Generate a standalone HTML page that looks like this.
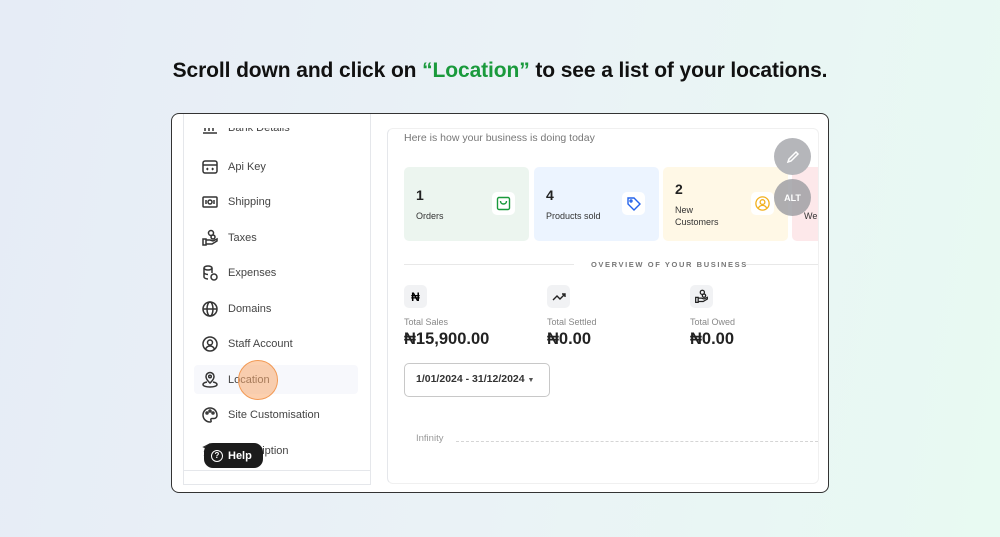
<!DOCTYPE html>
<html><head><meta charset="utf-8"><style>
*{margin:0;padding:0;box-sizing:border-box}
body{width:1000px;height:537px;overflow:hidden;font-family:"Liberation Sans",sans-serif;background:linear-gradient(100deg,#e6ecf6 0%,#eaf2f6 50%,#e8faf2 100%);position:relative}
.title{position:absolute;top:59px;left:0;width:1000px;text-align:center;font-size:21px;font-weight:bold;color:#111;letter-spacing:-0.1px}
.title span{color:#1a9a3c}
.frame{position:absolute;left:171px;top:113px;width:658px;height:380px;border:1.5px solid #333;border-radius:8px;background:#fff;overflow:hidden}
.side{position:absolute;left:11px;top:-5px;width:188px;height:376px;border:1px solid #e5e7eb;border-top:none}
.clip{position:absolute;left:0;top:19px;width:186px;height:340px;overflow:hidden}
.side .bot{position:absolute;left:0;right:0;top:361px;border-top:1px solid #e5e7eb}
.it{position:absolute;left:17px;height:28px;display:flex;align-items:center;font-size:11px;color:#444}
.it svg{width:18px;height:18px;margin-right:9px;stroke:#333;fill:none;stroke-width:1.5}
.hl{position:absolute;left:10px;top:237px;width:164px;height:29px;background:#f7f8fc;border-radius:4px}
.main{position:absolute;left:215px;top:14px;width:432px;height:356px;border-left:1px solid #e5e7eb;border-top:1px solid #f0f0f0;border-right:1px solid #f0f0f0;border-bottom:1px solid #f0f0f0;border-radius:6px;overflow:hidden}
.card{position:absolute;top:38px;width:125px;height:74px;border-radius:5px}
.card .n{position:absolute;left:12px;top:20px;font-size:14px;font-weight:bold;color:#222}
.card .l{position:absolute;left:12px;top:43px;font-size:9px;color:#333;line-height:12px}
.card .ic{position:absolute;left:88px;top:25px;width:23px;height:23px;background:#fff;border-radius:5px;display:flex;align-items:center;justify-content:center}
.sm{position:absolute;font-size:9px;color:#888}
.big{position:absolute;font-size:16.5px;font-weight:bold;color:#222}
.sq{position:absolute;width:23px;height:23px;background:#f1f2f4;border-radius:5px;display:flex;align-items:center;justify-content:center;font-weight:bold;font-size:12px}
</style></head><body>
<div class="title">Scroll down and click on <span>“Location”</span> to see a list of your locations.</div>
<div class="frame">
 <div class="side">
  <div class="clip">
  <div class="hl"></div>
  <div class="it" style="top:-14px"><svg viewBox="0 0 18 18"><path d="M2 14h14M4 12V6M8 12V6M12 12V6M3 5l6-3 6 3"/></svg>Bank Details</div>
  <div class="it" style="top:25px"><svg viewBox="0 0 18 18"><rect x="2" y="3" width="14" height="12" rx="2"/><path d="M2 7h14M7 10l-1 1 1 1M11 10l1 1-1 1"/></svg>Api Key</div>
  <div class="it" style="top:60px"><svg viewBox="0 0 18 18"><rect x="2" y="4" width="14" height="10" rx="1"/><circle cx="9" cy="9" r="2"/><path d="M5 7v4M13 7v4"/></svg>Shipping</div>
  <div class="it" style="top:96px"><svg viewBox="0 0 18 18"><circle cx="10" cy="4" r="2.5"/><circle cx="12" cy="8" r="2"/><path d="M2 10h3v6H2zM5 11h4l3 1 4-2v2l-5 3H5"/></svg>Taxes</div>
  <div class="it" style="top:131px"><svg viewBox="0 0 18 18"><ellipse cx="7" cy="4" rx="4" ry="2"/><path d="M3 4v9c0 1 2 2 4 2M11 4v5M3 8.5c0 1 2 2 4 2"/><circle cx="13" cy="13" r="3"/></svg>Expenses</div>
  <div class="it" style="top:167px"><svg viewBox="0 0 18 18"><circle cx="9" cy="9" r="7"/><ellipse cx="9" cy="9" rx="3" ry="7"/><path d="M2 9h14"/></svg>Domains</div>
  <div class="it" style="top:202px"><svg viewBox="0 0 18 18"><circle cx="9" cy="9" r="7"/><circle cx="9" cy="7.5" r="2.5"/><path d="M4.5 14c1-2 2.5-3 4.5-3s3.5 1 4.5 3"/></svg>Staff Account</div>
  <div class="it" style="top:238px"><svg viewBox="0 0 18 18"><path d="M9 12s4-3.5 4-6.5a4 4 0 00-8 0C5 8.5 9 12 9 12z"/><circle cx="9" cy="5.5" r="1.3"/><path d="M6 11c-3 .5-4 1.5-4 2.5 0 1.5 3 2.5 7 2.5s7-1 7-2.5c0-1-1-2-4-2.5"/></svg>Location</div>
  <div class="it" style="top:273px"><svg viewBox="0 0 18 18"><path d="M9 2a7 7 0 000 14c1 0 1.5-.7 1-1.5-.6-1 0-2 1-2h2a3 3 0 003-3C16 5 13 2 9 2z"/><circle cx="6" cy="7" r="1"/><circle cx="9" cy="5" r="1"/><circle cx="12" cy="7" r="1"/></svg>Site Customisation</div>
  <div class="it" style="top:309px"><svg viewBox="0 0 18 18"><path d="M3 5l6-3 6 3-6 3zM3 9l6 3 6-3M3 13l6 3 6-3"/></svg>Subscription</div>
  </div>
  <div class="bot"></div>
 </div>
 <div style="position:absolute;left:66px;top:246px;width:40px;height:40px;border-radius:50%;background:rgba(250,170,110,.55);border:1.5px solid #f29a55"></div>
 <div style="position:absolute;left:32px;top:329px;width:59px;height:25px;border-radius:9px;background:#1c1c1c;color:#fff;font-size:11px;font-weight:bold;display:flex;align-items:center;padding-left:7px"><span style="display:inline-block;width:12px;height:12px;border:1.2px solid #fff;border-radius:50%;font-size:8px;text-align:center;line-height:10px;margin-right:5px">?</span>Help</div>
 <div class="main">
  <div style="position:absolute;left:16px;top:3px;font-size:10.5px;color:#777">Here is how your business is doing today</div>
  <div class="card" style="left:16px;background:#ecf5ef"><div class="n">1</div><div class="l">Orders</div><div class="ic"><svg width="15" height="15" viewBox="0 0 15 15" fill="none" stroke="#1a9a3c" stroke-width="1.4"><rect x="1.5" y="1.5" width="12" height="12" rx="1.5"/><path d="M4.5 5c0 2 1.3 3 3 3s3-1 3-3"/></svg></div></div>
  <div class="card" style="left:146px;background:#ecf4ff"><div class="n">4</div><div class="l">Products sold</div><div class="ic"><svg width="16" height="16" viewBox="0 0 16 16" fill="none" stroke="#2563eb" stroke-width="1.4"><path d="M2 2h6l6 6-6 6-6-6z"/><circle cx="5" cy="5" r="1"/></svg></div></div>
  <div class="card" style="left:275px;background:#fff8e6"><div class="n" style="top:14px">2</div><div class="l" style="top:37px">New<br>Customers</div><div class="ic"><svg width="17" height="17" viewBox="0 0 18 18" fill="none" stroke="#f2b01e" stroke-width="1.4"><circle cx="9" cy="9" r="7"/><circle cx="9" cy="7.5" r="2.5"/><path d="M4.5 14c1-2 2.5-3 4.5-3s3.5 1 4.5 3"/></svg></div></div>
  <div class="card" style="left:404px;width:40px;background:#fde8ea"><div class="l" style="left:12px;top:43px">Wel</div></div>
  <div style="position:absolute;left:16px;top:135px;width:170px;border-top:1px solid #e8e8e8"></div>
  <div style="position:absolute;left:203px;top:131px;font-size:7.5px;letter-spacing:1.6px;color:#777;font-weight:bold">OVERVIEW OF YOUR BUSINESS</div>
  <div style="position:absolute;left:358px;top:135px;width:80px;border-top:1px solid #e8e8e8"></div>
  <div class="sq" style="left:16px;top:156px">₦</div>
  <div class="sq" style="left:159px;top:156px"><svg width="14" height="10" viewBox="0 0 14 10" fill="none" stroke="#222" stroke-width="1.4"><path d="M1 8l4-4 3 3 5-5M10 2h3v3"/></svg></div>
  <div class="sq" style="left:302px;top:156px"><svg width="15" height="15" viewBox="0 0 18 18" fill="none" stroke="#222" stroke-width="1.5"><circle cx="10" cy="4" r="2.5"/><circle cx="12" cy="8" r="2"/><path d="M2 10h3v6H2zM5 11h4l3 1 4-2v2l-5 3H5"/></svg></div>
  <div class="sm" style="left:16px;top:188px">Total Sales</div>
  <div class="sm" style="left:159px;top:188px">Total Settled</div>
  <div class="sm" style="left:302px;top:188px">Total Owed</div>
  <div class="big" style="left:16px;top:201px">₦15,900.00</div>
  <div class="big" style="left:159px;top:201px">₦0.00</div>
  <div class="big" style="left:302px;top:201px">₦0.00</div>
  <div style="position:absolute;left:16px;top:234px;width:146px;height:34px;border:1px solid #c8c8c8;border-radius:5px;font-size:10.5px;color:#333;font-weight:bold;padding:9px 0 0 11px">1/01/2024 - 31/12/2024 <span style="font-size:7px;color:#555">▼</span></div>
  <div style="position:absolute;left:28px;top:304px;font-size:9.5px;color:#999">Infinity</div>
  <div style="position:absolute;left:68px;top:312px;width:362px;border-top:1px dashed #d5d5d5"></div>
 </div>
 <div style="position:absolute;left:602px;top:24px;width:37px;height:37px;border-radius:50%;background:#b5b6ba;display:flex;align-items:center;justify-content:center"><svg width="16" height="16" viewBox="0 0 16 16" fill="none" stroke="#fff" stroke-width="1.5"><path d="M3 13l1-3 7-7 2 2-7 7z"/></svg></div>
 <div style="position:absolute;left:602px;top:65px;width:37px;height:37px;border-radius:50%;background:rgba(160,160,165,.85);color:#fff;font-size:9px;font-weight:bold;display:flex;align-items:center;justify-content:center">ALT</div>
</div>
</body></html>
